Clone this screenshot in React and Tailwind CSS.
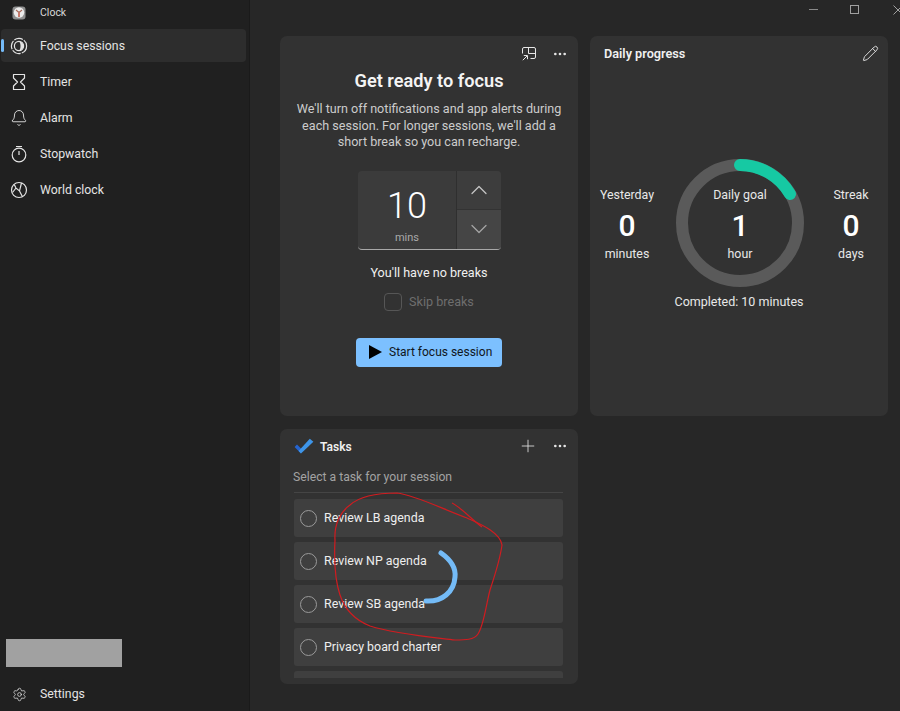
import React from 'react';
import { Bell, ChevronDown, ChevronUp, Ellipsis, Pencil, Plus, Settings } from 'lucide-react';

const FocusIcon = () => (
  <svg width="18" height="18" viewBox="0 0 18 18" fill="none" stroke="currentColor" strokeWidth="1.2">
    <circle cx="9" cy="9" r="7.6" strokeDasharray="9 1.2" />
    <circle cx="9" cy="9" r="4.6" />
    <path d="M9 4.4a4.6 4.6 0 0 1 0 9.2c2-1.5 2-7.7 0-9.2z" fill="currentColor" stroke="none" />
  </svg>
);

const HourglassIcon = () => (
  <svg width="18" height="18" viewBox="0 0 18 18" fill="none" stroke="currentColor" strokeWidth="1.2" strokeLinejoin="round">
    <path d="M3.500 1.500h11v3.500L10.500 9l4 4v3.500h-11V13l4-4-4-4z" />
  </svg>
);

const StopwatchIcon = () => (
  <svg width="18" height="18" viewBox="0 0 18 18" fill="none" stroke="currentColor" strokeWidth="1.2">
    <circle cx="9" cy="10" r="6.800" />
    <path d="M6 1.500h6M9 10V6" />
  </svg>
);

const GlobeIcon = () => (
  <svg width="18" height="18" viewBox="0 0 18 18" fill="none" stroke="currentColor" strokeWidth="1.2">
    <circle cx="9" cy="9" r="7.500" />
    <path d="M2.500 11.500 6 7l3.500 3 2-8M9.500 10l3 5.800M6 7 4.200 3.400" />
  </svg>
);

const ClockLogo = () => (
  <svg width="14" height="14" viewBox="0 0 14 14">
    <rect x="0.500" y="0.500" width="13" height="13" rx="3" fill="#8f8f8f" />
    <circle cx="7" cy="6.500" r="5.200" fill="#ececec" />
    <path d="M7 6.500 4 4M7 6.500 10 4" stroke="#a86a5a" strokeWidth="1.200" />
    <path d="M7 6.500V11" stroke="#c0604e" strokeWidth="1.600" />
  </svg>
);

const TodoLogo = () => (
  <svg width="20" height="16" viewBox="0 0 20 16">
    <path d="M7 15.500 .6 9 3 6.600 7 10.400z" fill="#2564cf" />
    <path d="M7 15.500 4.600 13 15.800 .8 19.400 3.800z" fill="#3e95e8" />
  </svg>
);

const ExpandIcon = () => (
  <svg width="14" height="14" viewBox="0 0 14 14" fill="none" stroke="#e6e6e6" strokeWidth="1">
    <path d="M.5 6.500V2A1.500 1.500 0 0 1 2 .5h10A1.500 1.500 0 0 1 13.500 2v8A1.500 1.500 0 0 1 12 11.500H8.500" />
    <path d="M6.500.5v6h7" />
    <path d="M.8 13.200 5 9M1.800 8.500h3.700v3.700" />
  </svg>
);

const navItems = [
  { label: 'Focus sessions', icon: <FocusIcon />, active: true },
  { label: 'Timer', icon: <HourglassIcon /> },
  { label: 'Alarm', icon: <Bell size={18} strokeWidth={1.2} /> },
  { label: 'Stopwatch', icon: <StopwatchIcon /> },
  { label: 'World clock', icon: <GlobeIcon /> },
];

const tasks = ['Review LB agenda', 'Review NP agenda', 'Review SB agenda', 'Privacy board charter'];

const Stat = ({ title, value, unit }) => (
  <div className="flex flex-col items-center text-[#e8e8e8]">
    <span className="text-[12.400px] leading-[18px]">{title}</span>
    <span className="mt-[4px] text-[30px] leading-[36px] font-medium text-white">{value}</span>
    <span className="mt-[1px] text-[12.400px] leading-[18px]">{unit}</span>
  </div>
);

export default function App() {
  return (
    <div className="relative flex h-[711px] w-[900px] overflow-hidden bg-[#272727] font-['Roboto',sans-serif] text-white">
      {/* sidebar */}
      <aside className="flex w-[250px] shrink-0 flex-col border-r border-[#1a1a1a] bg-[#202020] pl-[1px] pr-[3px]">
        <div className="flex h-[25px] shrink-0 items-center gap-[14px] pl-[11px] text-[10.500px] text-[#d8d8d8]">
          <ClockLogo />
          <span>Clock</span>
        </div>
        <nav className="mt-[4px] flex flex-col gap-[3px]">
          {navItems.map((item) => (
            <div key={item.label} className={`relative flex h-[33px] items-center gap-[12px] rounded-[4px] pl-[9px] text-[12.300px] text-[#e4e4e4] ${item.active ? 'bg-[#2d2d2d]' : ''}`}>
              {item.active && <span className="absolute left-0 top-[10px] h-[13px] w-[2.500px] rounded-full bg-[#75bbf9]" />}
              {item.icon}
              <span className="pt-[1px]">{item.label}</span>
            </div>
          ))}
        </nav>
        <div className="ml-[5px] mt-auto h-[28px] w-[116px] bg-[#a1a1a1]" />
        <div className="mt-[11px] flex h-[33px] items-center gap-[13px] pl-[11px] text-[12.300px] text-[#e4e4e4]">
          <Settings size={15} strokeWidth={1.2} />
          <span>Settings</span>
        </div>
      </aside>

      {/* main */}
      <main className="flex min-w-0 flex-1 flex-col">
        <div className="flex h-[36px] shrink-0 justify-end gap-[32px] pt-[5px]">
          <div className="mt-[4px] h-[1px] w-[9px] bg-[#8a8a8a]" />
          <div className="h-[9px] w-[9px] border border-[#a0a0a0]" />
          <svg className="-mr-[3px] ml-[2px] shrink-0" width="10" height="10" viewBox="0 0 10 10" stroke="#a0a0a0" strokeWidth="1">
            <path d="M.5.500l9 9M9.500.500l-9 9" />
          </svg>
        </div>
        <div className="grid grid-cols-[298px_298px] grid-rows-[380px_255px] gap-x-[12px] gap-y-[13px] pl-[30px]">
          {/* focus card */}
          <section className="flex flex-col items-center rounded-[7px] bg-[#323232]">
            <div className="flex h-[33px] w-full shrink-0 items-center justify-end gap-[16px] pb-[1px] pr-[10px] pt-[3px]">
              <ExpandIcon />
              <Ellipsis size={16} strokeWidth={2} className="text-[#e6e6e6]" />
            </div>
            <h1 className="text-[18.200px] font-semibold leading-[24px] text-[#f4f4f4]">Get ready to focus</h1>
            <p className="mt-[8px] w-[280px] text-center text-[12.600px] leading-[16.500px] text-[#cccccc]">
              We'll turn off notifications and app alerts during each session. For longer sessions, we'll add a short break so you can recharge.
            </p>
            <div className="ml-[1px] mt-[20px] flex h-[79px] w-[143px] overflow-hidden rounded-[4px] border-b border-[#a8a8a8] bg-[#3b3b3b]">
              <div className="flex flex-1 flex-col items-center border-r border-[#2f2f2f]">
                <span className="mt-[11px] text-[36px] font-light leading-[48px]">10</span>
                <span className="mt-[1px] text-[11px] leading-[14px] text-[#a9a9a9]">mins</span>
              </div>
              <div className="flex w-[44px] flex-col">
                <div className="flex h-[39px] items-center justify-center border-b border-[#333333] bg-[#3d3d3d]">
                  <ChevronUp size={28} strokeWidth={1.100} className="text-[#c4c4c4]" />
                </div>
                <div className="flex flex-1 items-center justify-center bg-[#454545]">
                  <ChevronDown size={28} strokeWidth={1.100} className="text-[#a4a4a4]" />
                </div>
              </div>
            </div>
            <p className="mt-[14px] text-[12.600px] leading-[18px] text-[#f0f0f0]">You'll have no breaks</p>
            <div className="mt-[11px] flex items-center gap-[7px] text-[12.600px] leading-[18px] text-[#6e6e6e]">
              <span className="h-[18px] w-[18px] rounded-[4px] border border-[#565656]" />
              <span>Skip breaks</span>
            </div>
            <button className="mt-[27px] flex h-[29px] w-[146px] items-center gap-[7px] rounded-[4px] bg-[#7cc0ff] pl-[13px] text-[12px] text-[#10161c]">
              <svg className="shrink-0" width="13" height="14" viewBox="0 0 13 14"><path d="M0 0 13 7 0 14z" fill="#000" /></svg>
              <span className="whitespace-nowrap">Start focus session</span>
            </button>
          </section>

          {/* daily progress card */}
          <section className="flex flex-col rounded-[7px] bg-[#323232]">
            <div className="flex h-[34px] items-center justify-between pl-[14px] pr-[9px]">
              <h2 className="pt-[1px] text-[12.700px] font-semibold text-[#f0f0f0]">Daily progress</h2>
              <Pencil size={17} strokeWidth={1.300} className="text-[#e6e6e6]" />
            </div>
            <div className="mt-[89px] flex items-center">
              <div className="mt-[2px] w-[74px]"><Stat title="Yesterday" value="0" unit="minutes" /></div>
              <div className="relative ml-[12px] h-[128px] w-[128px]">
                <svg width="128" height="128" viewBox="0 0 128 128" fill="none" strokeWidth="12">
                  <circle cx="64" cy="64" r="58" stroke="#5a5a5a" />
                  <path d="M64 6a58 58 0 0 1 50 29" stroke="#16c9a3" strokeLinecap="round" />
                </svg>
                <div className="absolute inset-0 flex justify-center pt-[27px]">
                  <Stat title="Daily goal" value="1" unit="hour" />
                </div>
              </div>
              <div className="ml-[10px] mt-[2px] w-[74px]"><Stat title="Streak" value="0" unit="days" /></div>
            </div>
            <p className="mt-[6px] text-center text-[12.500px] leading-[18px] text-[#e8e8e8]">Completed: 10 minutes</p>
          </section>

          {/* tasks card */}
          <section className="flex flex-col overflow-hidden rounded-[7px] bg-[#323232] pb-[6px] pl-[14px] pr-[15px]">
            <div className="flex h-[34px] shrink-0 items-center">
              <TodoLogo />
              <h2 className="ml-[6px] mt-[2px] text-[12px] font-semibold text-[#f0f0f0]">Tasks</h2>
              <Plus size={20} strokeWidth={1} className="ml-auto text-[#e6e6e6]" />
              <Ellipsis size={16} strokeWidth={2} className="ml-[14px] -mr-[5px] text-[#e6e6e6]" />
            </div>
            <p className="-ml-[1px] mt-[5px] text-[12.200px] leading-[18px] text-[#a3a3a3]">Select a task for your session</p>
            <div className="mt-[6px] h-[1px] shrink-0 bg-[#454545]" />
            <div className="mt-[6px] flex min-h-0 flex-1 flex-col gap-[5px] overflow-hidden">
              {tasks.map((task) => (
                <div key={task} className="flex h-[38px] shrink-0 items-center gap-[7px] rounded-[3px] bg-[#3f3f3f] pl-[6px] text-[12.400px] text-[#eeeeee]">
                  <span className="h-[17px] w-[17px] rounded-full border border-[#9a9a9a]" />
                  <span className="pt-[1px]">{task}</span>
                </div>
              ))}
              <div className="h-[38px] shrink-0 rounded-[3px] bg-[#3f3f3f]" />
            </div>
          </section>
        </div>
      </main>

      {/* spinner and pen markup drawn over the list */}
      <svg className="pointer-events-none absolute left-0 top-0" width="900" height="711" viewBox="0 0 900 711" fill="none">
        <path d="M441 553C451 560 456 568 455 577C454 592 442 602 426 601" stroke="#74bbf7" strokeWidth="5" strokeLinecap="round" />
        <path d="M335 540C334 525 340 512 350 505C360 496 380 493 397 493C415 495 440 508 467 518C480 524 500 532 502 545C500 560 495 575 490 590C486 605 484 625 478 634C474 640 465 640 455 640C430 637 395 634 370 626C355 620 345 610 340 595C335 580 334 560 335 540Z" stroke="#d01c20" strokeWidth="1.200" />
        <path d="M452 503C462 508 472 520 482 527" stroke="#d01c20" strokeWidth="1.200" />
      </svg>
    </div>
  );
}
